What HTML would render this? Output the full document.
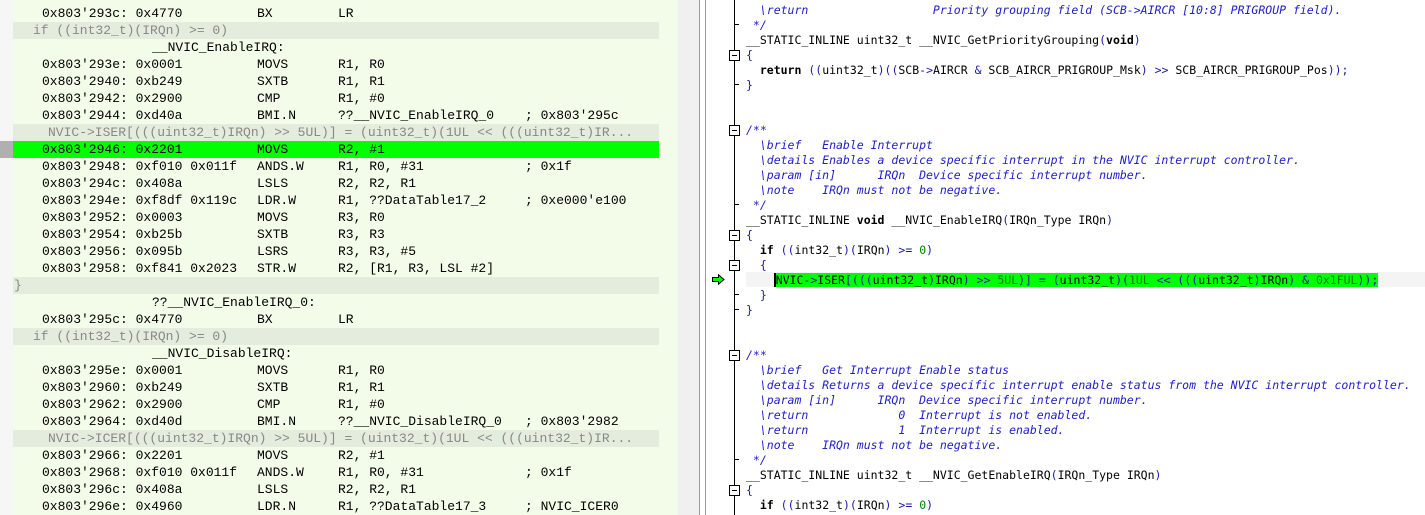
<!DOCTYPE html>
<html><head><meta charset="utf-8"><style>
*{margin:0;padding:0;box-sizing:border-box}
body{width:1425px;height:515px;overflow:hidden;background:#fff;position:relative;font-family:"Liberation Mono",monospace}
#left{position:absolute;left:0;top:0;width:678px;height:515px;background:#f2fce9}
#lg{position:absolute;left:0;top:0;width:13px;height:515px;background:#f6f6f6}
.lr{position:absolute;left:13px;width:646px;height:17px;font-size:13px;line-height:17px;white-space:pre;color:#000}
.lr span{position:absolute;top:0}
.a{left:29px}.m{left:244px}.p{left:325px}.k{left:512px}
.src{background:#e4ecdd;color:#888}
.hl{background:#00ff00}
#sb{position:absolute;left:678px;top:0;width:22px;height:515px;background:#f0f0f0;border-right:1px solid #999}
#v2{position:absolute;left:705px;top:0;width:1px;height:515px;background:#999}
#fold{position:absolute;left:734px;top:0;width:1px;height:515px;background:#000}
.fb{position:absolute;left:729px;width:11px;height:11px;border:1px solid #000;background:#fff}
.fb:after{content:"";position:absolute;left:2px;top:4px;width:5px;height:1px;background:#000}
.tk{position:absolute;left:734px;width:5px;height:1px;background:#000}
.rr{position:absolute;left:746px;height:15px;font-family:"DejaVu Sans Mono",monospace;font-size:11.5px;line-height:15px;white-space:pre;color:#000}
.c{color:#2020c8;font-style:italic}
.o{color:#1a1aa6}
.n{color:#008000}
.b{font-weight:bold}
</style></head><body>
<div id="left"><div id="lg"></div>
<div class="lr" style="top:5px"><span class="a">0x803'293c: 0x4770</span><span class="m">BX</span><span class="p">LR</span></div>
<div class="lr src" style="top:22px"><span style="left:20px">if ((int32_t)(IRQn) &gt;= 0)</span></div>
<div class="lr" style="top:39px"><span style="left:139px">__NVIC_EnableIRQ:</span></div>
<div class="lr" style="top:56px"><span class="a">0x803'293e: 0x0001</span><span class="m">MOVS</span><span class="p">R1, R0</span></div>
<div class="lr" style="top:73px"><span class="a">0x803'2940: 0xb249</span><span class="m">SXTB</span><span class="p">R1, R1</span></div>
<div class="lr" style="top:90px"><span class="a">0x803'2942: 0x2900</span><span class="m">CMP</span><span class="p">R1, #0</span></div>
<div class="lr" style="top:107px"><span class="a">0x803'2944: 0xd40a</span><span class="m">BMI.N</span><span class="p">??__NVIC_EnableIRQ_0</span><span class="k">; 0x803'295c</span></div>
<div class="lr src" style="top:124px"><span style="left:35px">NVIC-&gt;ISER[(((uint32_t)IRQn) &gt;&gt; 5UL)] = (uint32_t)(1UL &lt;&lt; (((uint32_t)IR...</span></div>
<div class="lr hl" style="top:141px"><span class="a">0x803'2946: 0x2201</span><span class="m">MOVS</span><span class="p">R2, #1</span></div>
<div class="lr" style="top:158px"><span class="a">0x803'2948: 0xf010 0x011f</span><span class="m">ANDS.W</span><span class="p">R1, R0, #31</span><span class="k">; 0x1f</span></div>
<div class="lr" style="top:175px"><span class="a">0x803'294c: 0x408a</span><span class="m">LSLS</span><span class="p">R2, R2, R1</span></div>
<div class="lr" style="top:192px"><span class="a">0x803'294e: 0xf8df 0x119c</span><span class="m">LDR.W</span><span class="p">R1, ??DataTable17_2</span><span class="k">; 0xe000'e100</span></div>
<div class="lr" style="top:209px"><span class="a">0x803'2952: 0x0003</span><span class="m">MOVS</span><span class="p">R3, R0</span></div>
<div class="lr" style="top:226px"><span class="a">0x803'2954: 0xb25b</span><span class="m">SXTB</span><span class="p">R3, R3</span></div>
<div class="lr" style="top:243px"><span class="a">0x803'2956: 0x095b</span><span class="m">LSRS</span><span class="p">R3, R3, #5</span></div>
<div class="lr" style="top:260px"><span class="a">0x803'2958: 0xf841 0x2023</span><span class="m">STR.W</span><span class="p">R2, [R1, R3, LSL #2]</span></div>
<div class="lr src" style="top:277px"><span style="left:1px">}</span></div>
<div class="lr" style="top:294px"><span style="left:139px">??__NVIC_EnableIRQ_0:</span></div>
<div class="lr" style="top:311px"><span class="a">0x803'295c: 0x4770</span><span class="m">BX</span><span class="p">LR</span></div>
<div class="lr src" style="top:328px"><span style="left:20px">if ((int32_t)(IRQn) &gt;= 0)</span></div>
<div class="lr" style="top:345px"><span style="left:139px">__NVIC_DisableIRQ:</span></div>
<div class="lr" style="top:362px"><span class="a">0x803'295e: 0x0001</span><span class="m">MOVS</span><span class="p">R1, R0</span></div>
<div class="lr" style="top:379px"><span class="a">0x803'2960: 0xb249</span><span class="m">SXTB</span><span class="p">R1, R1</span></div>
<div class="lr" style="top:396px"><span class="a">0x803'2962: 0x2900</span><span class="m">CMP</span><span class="p">R1, #0</span></div>
<div class="lr" style="top:413px"><span class="a">0x803'2964: 0xd40d</span><span class="m">BMI.N</span><span class="p">??__NVIC_DisableIRQ_0</span><span class="k">; 0x803'2982</span></div>
<div class="lr src" style="top:430px"><span style="left:35px">NVIC-&gt;ICER[(((uint32_t)IRQn) &gt;&gt; 5UL)] = (uint32_t)(1UL &lt;&lt; (((uint32_t)IR...</span></div>
<div class="lr" style="top:447px"><span class="a">0x803'2966: 0x2201</span><span class="m">MOVS</span><span class="p">R2, #1</span></div>
<div class="lr" style="top:464px"><span class="a">0x803'2968: 0xf010 0x011f</span><span class="m">ANDS.W</span><span class="p">R1, R0, #31</span><span class="k">; 0x1f</span></div>
<div class="lr" style="top:481px"><span class="a">0x803'296c: 0x408a</span><span class="m">LSLS</span><span class="p">R2, R2, R1</span></div>
<div class="lr" style="top:498px"><span class="a">0x803'296e: 0x4960</span><span class="m">LDR.N</span><span class="p">R1, ??DataTable17_3</span><span class="k">; NVIC_ICER0</span></div>
</div>
<div style="position:absolute;left:0;top:141px;width:13px;height:17px;background:#b0b0b0"></div>
<div id="sb"></div><div id="v2"></div>
<div id="fold"></div>
<div class="tk" style="top:24px"></div><div class="tk" style="top:84px"></div>
<div class="fb" style="top:50px"></div><div class="fb" style="top:125px"></div>
<div class="tk" style="top:204px"></div>
<div class="fb" style="top:230px"></div><div class="fb" style="top:260px"></div>
<div class="tk" style="top:294px"></div><div class="tk" style="top:309px"></div>
<div class="fb" style="top:350px"></div><div class="tk" style="top:459px"></div>
<div class="fb" style="top:485px"></div>
<svg style="position:absolute;left:712px;top:274px" width="13" height="11" viewBox="0 0 13 11"><path d="M0.5 3.5H6.5V0.8L12 5.5L6.5 10.2V7.5H0.5Z" fill="#00ff00" stroke="#000" stroke-width="1"/></svg>
<div style="position:absolute;left:746px;top:272px;width:679px;height:15px;background:#f4f4f4"></div>
<div class="rr c" style="top:3px">  \return                  Priority grouping field (SCB-&gt;AIRCR [10:8] PRIGROUP field).</div>
<div class="rr c" style="top:18px"> */</div>
<div class="rr" style="top:33px">__STATIC_INLINE uint32_t __NVIC_GetPriorityGrouping<span class="o">(</span><span class="b">void</span><span class="o">)</span></div>
<div class="rr o" style="top:48px">{</div>
<div class="rr" style="top:63px">  <span class="b">return</span> <span class="o">((</span>uint32_t<span class="o">)((</span>SCB<span class="o">-&gt;</span>AIRCR <span class="o">&amp;</span> SCB_AIRCR_PRIGROUP_Msk<span class="o">) &gt;&gt;</span> SCB_AIRCR_PRIGROUP_Pos<span class="o">));</span></div>
<div class="rr o" style="top:78px">}</div>
<div class="rr c" style="top:123px">/**</div>
<div class="rr c" style="top:138px">  \brief   Enable Interrupt</div>
<div class="rr c" style="top:153px">  \details Enables a device specific interrupt in the NVIC interrupt controller.</div>
<div class="rr c" style="top:168px">  \param [in]      IRQn  Device specific interrupt number.</div>
<div class="rr c" style="top:183px">  \note    IRQn must not be negative.</div>
<div class="rr c" style="top:198px"> */</div>
<div class="rr" style="top:213px">__STATIC_INLINE <span class="b">void</span> __NVIC_EnableIRQ<span class="o">(</span>IRQn_Type IRQn<span class="o">)</span></div>
<div class="rr o" style="top:228px">{</div>
<div class="rr" style="top:243px">  <span class="b">if</span> <span class="o">((</span>int32_t<span class="o">)(</span>IRQn<span class="o">) &gt;=</span> <span class="n">0</span><span class="o">)</span></div>
<div class="rr o" style="top:258px">  {</div>
<div class="rr" style="top:273px">    <span style="background:#00ff00;border-left:2px solid #000">NVIC<span class="o">-&gt;</span>ISER<span class="o">[(((</span>uint32_t<span class="o">)</span>IRQn<span class="o">) &gt;&gt;</span> <span class="n">5UL</span><span class="o">)] = (</span>uint32_t<span class="o">)(</span><span class="n">1UL</span> <span class="o">&lt;&lt; (((</span>uint32_t<span class="o">)</span>IRQn<span class="o">) &amp;</span> <span class="n">0x1FUL</span><span class="o">));</span></span></div>
<div class="rr o" style="top:288px">  }</div>
<div class="rr o" style="top:303px">}</div>
<div class="rr c" style="top:348px">/**</div>
<div class="rr c" style="top:363px">  \brief   Get Interrupt Enable status</div>
<div class="rr c" style="top:378px">  \details Returns a device specific interrupt enable status from the NVIC interrupt controller.</div>
<div class="rr c" style="top:393px">  \param [in]      IRQn  Device specific interrupt number.</div>
<div class="rr c" style="top:408px">  \return             0  Interrupt is not enabled.</div>
<div class="rr c" style="top:423px">  \return             1  Interrupt is enabled.</div>
<div class="rr c" style="top:438px">  \note    IRQn must not be negative.</div>
<div class="rr c" style="top:453px"> */</div>
<div class="rr" style="top:468px">__STATIC_INLINE uint32_t __NVIC_GetEnableIRQ<span class="o">(</span>IRQn_Type IRQn<span class="o">)</span></div>
<div class="rr o" style="top:483px">{</div>
<div class="rr" style="top:498px">  <span class="b">if</span> <span class="o">((</span>int32_t<span class="o">)(</span>IRQn<span class="o">) &gt;=</span> <span class="n">0</span><span class="o">)</span></div>
</body></html>
